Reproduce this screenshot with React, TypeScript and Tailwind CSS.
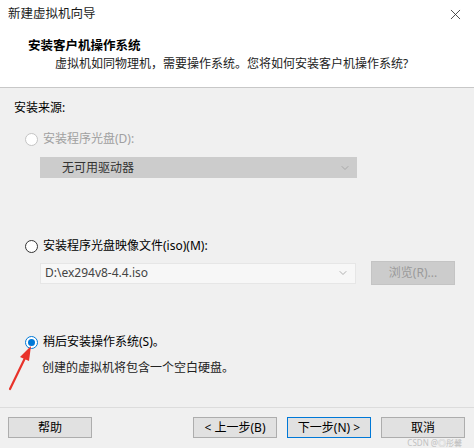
import { X, ChevronDown } from "lucide-react";

// Radio button in the classic Windows dialog look
function Radio({ checked = false, disabled = false }: { checked?: boolean; disabled?: boolean }) {
  return (
    <span
      className={
        "flex h-[13px] w-[13px] shrink-0 items-center justify-center rounded-full border bg-white " +
        (checked ? "border-[#0078d7]" : disabled ? "border-[#c4c4c4] bg-[#f4f4f4]" : "border-[#333333]")
      }
    >
      {checked && <span className="h-[7px] w-[7px] rounded-full bg-[#0078d7]" />}
    </span>
  );
}

function Button({ label, primary = false }: { label: string; primary?: boolean }) {
  return (
    <button
      className={
        "flex h-[21px] w-[84px] items-center justify-center border text-[12px] text-black " +
        (primary ? "border-[#0078d7] bg-[#e1e1e1]" : "border-[#adadad] bg-[#e1e1e1]")
      }
    >
      {label}
    </button>
  );
}

export default function App() {
  return (
    <div
      className="relative flex h-[448px] w-[474px] flex-col overflow-hidden bg-[#f0f0f0] text-[12px] text-black"
      style={{ fontFamily: '"Noto Sans", "Noto Sans CJK SC", sans-serif' }}
    >
      {/* Header */}
      <header className="flex h-[88px] shrink-0 flex-col border-b border-[#c8c8c8] bg-white">
        <div className="flex h-[29px] items-center justify-between pl-[8px] pr-[10px]">
          <span className="text-[12.5px] text-[#1a1a1a]">新建虚拟机向导</span>
          <X size={17} strokeWidth={1.2} className="text-[#333]" />
        </div>
        <p className="mt-[8px] pl-[28px] text-[12.5px] font-bold leading-[18px]">安装客户机操作系统</p>
        <p className="pl-[55px] leading-[17px] text-[#222]">虚拟机如同物理机，需要操作系统。您将如何安装客户机操作系统?</p>
      </header>

      {/* Install source */}
      <main className="flex flex-1 flex-col px-[14px]">
        <p className="mt-[11px] leading-[18px]">安装来源:</p>

        <label className="mt-[13px] flex items-center gap-[5px] pl-[11px] leading-[18px] text-[#a0a0a0]">
          <Radio disabled />
          安装程序光盘(D):
        </label>
        <div className="ml-[26px] mt-[9px] flex h-[21px] w-[317px] items-center justify-between bg-[#cccccc] pl-[22px] pr-[6px] text-[#333]">
          <span>无可用驱动器</span>
          <ChevronDown size={12} className="text-[#a8a8a8]" />
        </div>

        <label className="mt-[59px] flex items-center gap-[5px] pl-[11px] leading-[18px]">
          <Radio />
          安装程序光盘映像文件(iso)(M):
        </label>
        <div className="ml-[26px] mt-[6px] flex items-center gap-[15px]">
          <div className="flex h-[21px] w-[316px] items-center justify-between border border-[#e6e6e6] bg-[#f7f7f7] pl-[4px] pr-[6px] text-[#444]">
            <span>D:\ex294v8-4.4.iso</span>
            <ChevronDown size={12} className="text-[#b0b0b0]" />
          </div>
          <div className="flex h-[24px] w-[84px] items-center justify-center border border-[#c4c4c4] bg-[#cccccc] text-[#9a9a9a]">
            浏览(R)...
          </div>
        </div>

        <label className="mt-[48px] flex items-center gap-[5px] pl-[11px] leading-[18px]">
          <Radio checked />
          稍后安装操作系统(S)。
        </label>
        <p className="mt-[8px] pl-[28px] leading-[18px] text-[#222]">创建的虚拟机将包含一个空白硬盘。</p>
      </main>

      {/* Footer buttons */}
      <footer className="flex h-[41px] shrink-0 items-start border-t border-[#dcdcdc] pl-[8px] pt-[9px]">
        <Button label="帮助" />
        <div className="ml-auto flex gap-[10px] pr-[9px]">
          <Button label="< 上一步(B)" />
          <Button label="下一步(N) >" primary />
          <Button label="取消" />
        </div>
      </footer>

      <span className="absolute bottom-0 right-[12px] text-[8px] leading-[10px] text-[#c0c0c0]">CSDN @◎彤馨</span>

      {/* Red annotation arrow pointing at the selected radio */}
      <svg className="absolute left-0 top-[340px]" width="40" height="52" viewBox="0 0 40 52">
        <path d="M10 49 L25.5 17" stroke="#e8322a" strokeWidth="2.2" strokeLinecap="round" />
        <polygon points="31,6 20,17 29,21" fill="#e8322a" />
      </svg>
    </div>
  );
}
